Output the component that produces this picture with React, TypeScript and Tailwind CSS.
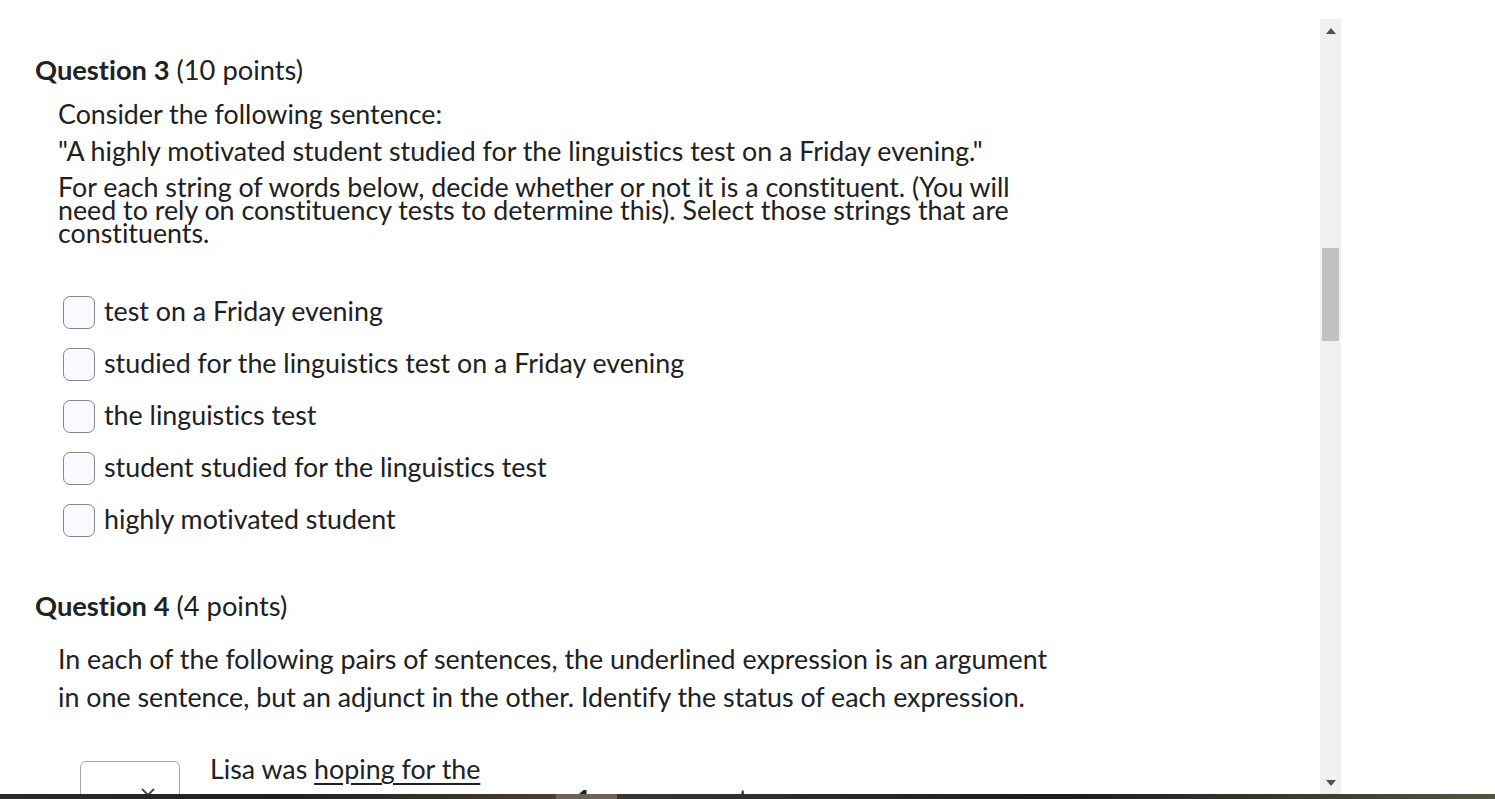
import React from "react";

const options = [
  "test on a Friday evening",
  "studied for the linguistics test on a Friday evening",
  "the linguistics test",
  "student studied for the linguistics test",
  "highly motivated student",
];

function Checkbox() {
  return (
    <div className="w-[32px] h-[33px] shrink-0 rounded-[7px] border border-[#868686] bg-[#f9faff]" />
  );
}

export default function App() {
  return (
    <div
      className="w-[1495px] h-[799px] bg-white flex flex-col overflow-hidden text-[#202122] [font-variant-ligatures:none]"
      style={{ fontFamily: "Lato, 'Noto Sans', sans-serif" }}
    >
      <div className="flex flex-1 min-h-0">
        <div className="flex-1 min-w-0 overflow-hidden pl-[35px] pt-[54px] text-[26.8px]">
          <h2 className="h-[32px] leading-[32px] whitespace-nowrap text-[27.3px]">
            <span className="font-bold">Question 3</span> (10 points)
          </h2>
          <div className="pl-[23px]">
            <p className="mt-[10px] leading-[37px] whitespace-nowrap">
              Consider the following sentence:
              <br />
              "A highly motivated student studied for the linguistics test on a Friday evening."
            </p>
            <p className="mt-[6px] leading-[23px] whitespace-nowrap">
              For each string of words below, decide whether or not it is a constituent. (You will
              <br />
              need to rely on constituency tests to determine this). Select those strings that are
              <br />
              constituents.
            </p>
            <div className="mt-[41px] flex flex-col">
              {options.map((o) => (
                <label key={o} className="h-[52px] flex items-center gap-[9px] pl-[5px] whitespace-nowrap">
                  <Checkbox />
                  <span className="leading-[30px] -mt-[2px]">{o}</span>
                </label>
              ))}
            </div>
          </div>
          <h2 className="mt-[44px] h-[32px] leading-[32px] whitespace-nowrap text-[27.3px]">
            <span className="font-bold">Question 4</span> (4 points)
          </h2>
          <div className="pl-[23px]">
            <p className="mt-[18px] leading-[38px] whitespace-nowrap">
              In each of the following pairs of sentences, the underlined expression is an argument
              <br />
              in one sentence, but an adjunct in the other. Identify the status of each expression.
            </p>
            <div className="mt-[41px] flex items-start pl-[22px]">
              <div className="mt-[4px] w-[100px] h-[44px] rounded-[6px] border border-[#a9a9a9] flex items-start justify-end pt-[26px] pr-[24px] shrink-0">
                <svg width="14" height="9" viewBox="0 0 14 9">
                  <path d="M1 1l6 6 6-6" fill="none" stroke="#494c4e" strokeWidth="2" />
                </svg>
              </div>
              <div className="ml-[30px] leading-[24px] whitespace-nowrap">
                <div>
                  Lisa was <span className="underline underline-offset-[4px]">hoping for the</span>
                </div>
                <div className="flex items-center mt-[6px]">
                  <span className="ml-[366px] font-bold">1</span>
                  <span className="ml-[22px] underline underline-offset-[4px]">assessment</span>
                </div>
              </div>
            </div>
          </div>
        </div>
        <div className="w-[21px] mt-[19px] bg-[#f0f0f0] flex flex-col items-center relative shrink-0">
          <svg width="10" height="6" viewBox="0 0 10 6" className="mt-[9px]">
            <path d="M5 0L10 6H0z" fill="#505050" />
          </svg>
          <div className="absolute left-[2px] top-[229px] w-[17px] h-[93px] bg-[#c1c1c1]" />
          <div className="flex-1" />
          <svg width="10" height="6" viewBox="0 0 10 6" className="mb-[8px]">
            <path d="M0 0H10L5 6z" fill="#505050" />
          </svg>
        </div>
        <div className="w-[154px] shrink-0" />
      </div>
      <div className="h-[5px] shrink-0 flex">
        <div className="w-[556px] h-full bg-gradient-to-r from-[#2b2a26] via-[#1f201c] to-[#4a3f33]" />
        <div className="w-[61px] h-full bg-[#6a635a]" />
        <div className="flex-1 h-full bg-gradient-to-r from-[#3a3631] via-[#1c1d1b] to-[#56553f]" />
      </div>
    </div>
  );
}
